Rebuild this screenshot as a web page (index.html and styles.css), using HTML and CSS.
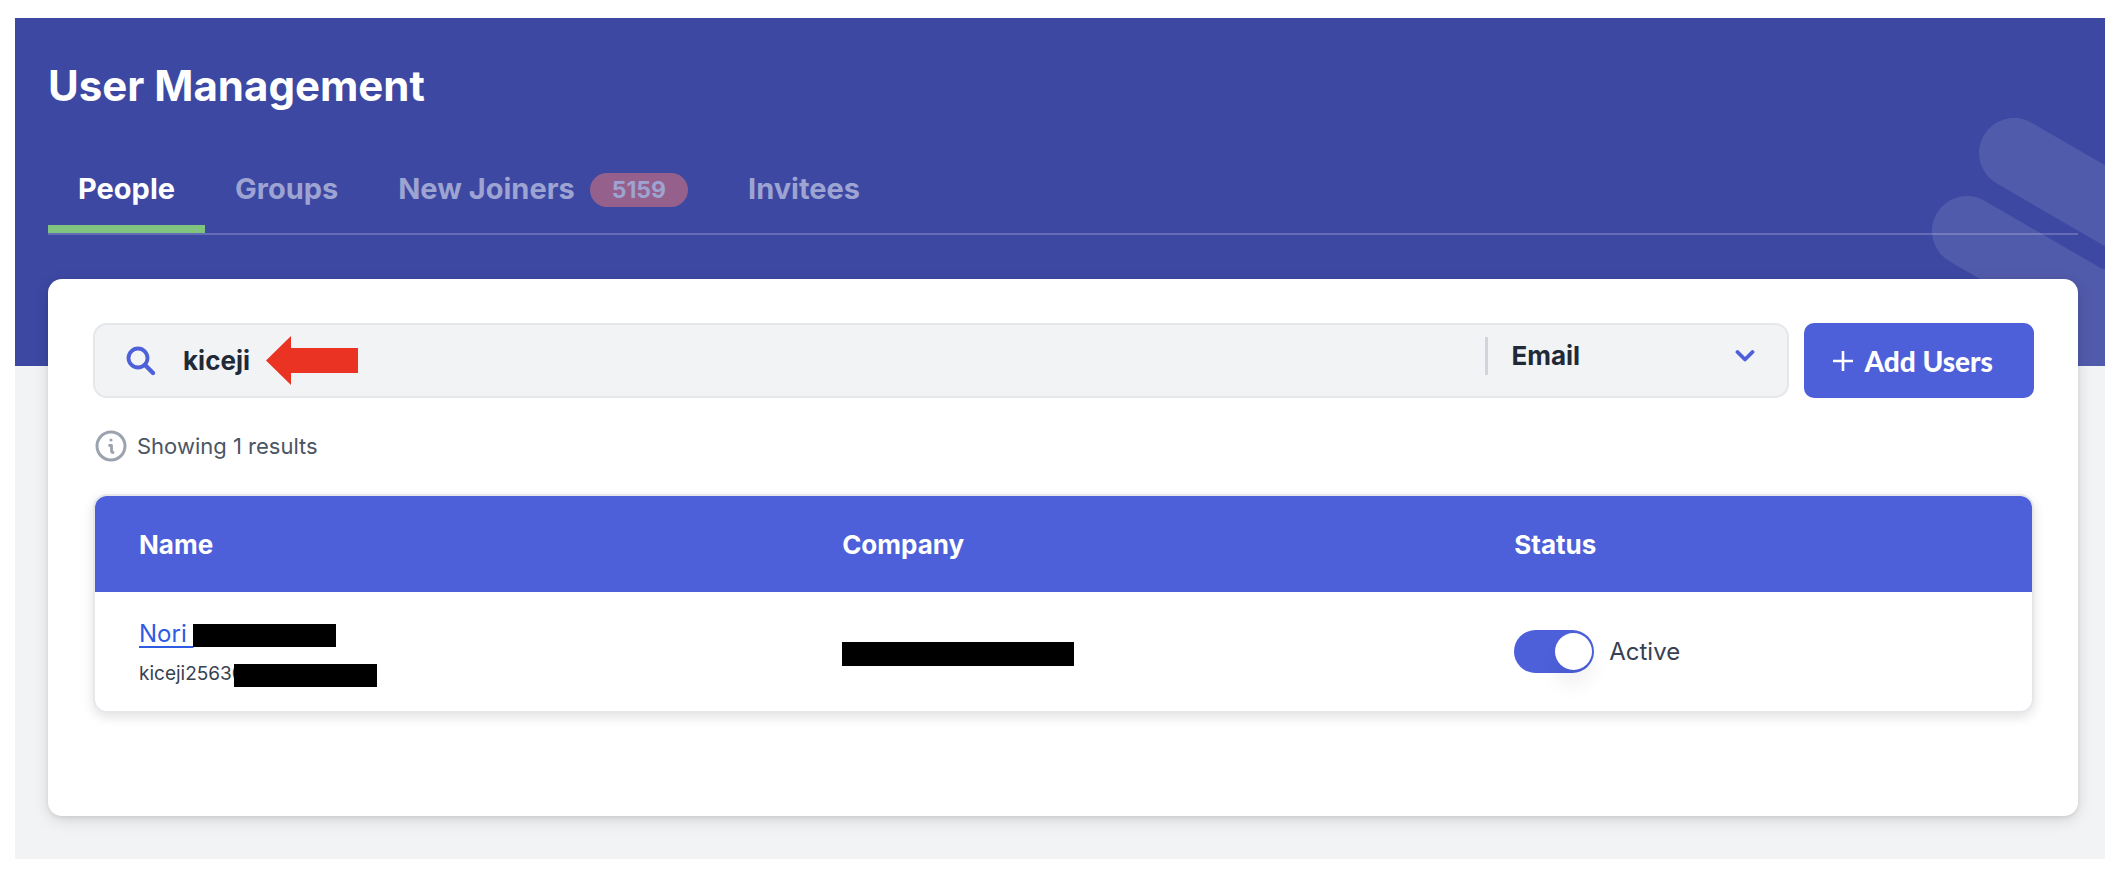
FILE: index.html
```
<!DOCTYPE html>
<html lang="en">
<head>
  <meta charset="UTF-8" />
  <meta name="viewport" content="width=device-width, initial-scale=1.0"/>
  <title>User Management</title>
  <link rel="stylesheet" href="styles.css">
</head>
<body>

  <div class="page">
    <header class="hero">
      <svg class="hero-shape" width="173" height="249" viewBox="0 0 173 249" aria-hidden="true">
        <g opacity="0.1" fill="#fff" stroke="#fff">
          <path d="M82 36 L232 123" stroke-width="70" stroke-linecap="round"/>
          <path d="M35 114 L185 201" stroke-width="70" stroke-linecap="round"/>
          <path d="M100 152 H173 V249 H100 Z" stroke="none"/>
        </g>
      </svg>
      <h1>User Management</h1>
      <nav class="tabs">
        <a href="#people" class="tab active">People</a>
        <a href="#groups" class="tab">Groups</a>
        <a href="#joiners" class="tab">New Joiners <span class="badge">5159</span></a>
        <a href="#invitees" class="tab">Invitees</a>
      </nav>
    </header>

    <main class="card">
      <div class="toolbar">
        <div class="search">
          <svg class="search-icon" width="32" height="32" viewBox="0 0 32 32" fill="none" stroke="#4d60da" stroke-linecap="round" aria-hidden="true">
            <circle cx="13" cy="13" r="9.5" stroke-width="3.8"/>
            <path d="M20 20 L28 28" stroke-width="4.4"/>
          </svg>
          <input class="search-input" type="text" value="kiceji" aria-label="Search users">
          <div class="filter">
            <select class="filter-select" aria-label="Search by">
              <option>Email</option>
              <option>Name</option>
            </select>
            <svg class="chevron" width="20" height="14" viewBox="0 0 20 14" fill="none" stroke="#4d60da" stroke-width="3.8" stroke-linecap="round" stroke-linejoin="round" aria-hidden="true">
              <path d="M2.5 3 L10 10.5 L17.5 3"/>
            </svg>
          </div>
          <svg class="pointer" width="92" height="49" viewBox="0 0 92 49" aria-hidden="true">
            <path d="M0 24.5 L25 0 V12 H92 V37 H25 V49 Z" fill="#ea3323"/>
          </svg>
        </div>
        <button class="add-btn" type="button">
          <svg width="22" height="22" viewBox="0 0 22 22" stroke="#fff" stroke-width="2.6" aria-hidden="true">
            <path d="M11 1 V21 M1 11 H21"/>
          </svg>
          Add Users
        </button>
      </div>

      <p class="results">
        <svg width="32" height="32" viewBox="0 0 32 32" fill="none" stroke="#9ca3af" aria-hidden="true">
          <circle cx="16" cy="16" r="14" stroke-width="3"/>
          <circle cx="16" cy="10" r="1.6" fill="#9ca3af" stroke="none"/>
          <path d="M14.5 15.5 H16.5 V20.5 Q16.500 22.500 18 22.500" stroke-width="2.8" stroke-linecap="round" stroke-linejoin="round"/>
        </svg>
        Showing 1 results
      </p>

      <div class="table-box">
        <table class="users">
          <thead>
            <tr>
              <th class="col-name">Name</th>
              <th class="col-company">Company</th>
              <th>Status</th>
            </tr>
          </thead>
          <tbody>
            <tr>
              <td class="user">
                <div class="user-name"><a href="#user">Nori&nbsp;</a><span class="redacted"></span></div>
                <div class="user-mail">kiceji25630<span class="redacted"></span></div>
              </td>
              <td><span class="redacted wide"></span></td>
              <td>
                <label class="status">
                  <input class="toggle" type="checkbox" checked>
                  Active
                </label>
              </td>
            </tr>
          </tbody>
        </table>
      </div>
    </main>
  </div>

</body>
</html>
```
FILE: styles.css
```
* {
  box-sizing: border-box;
}

body {
  margin: 0;
  padding: 18px 21px 13px 15px;
  background: #fff;
  font-family: Inter, "Liberation Sans", sans-serif;
  color: #374151;
}

.page {
  background: #f2f3f5;
  padding-bottom: 43px;
}

.hero {
  position: relative;
  background: #3d48a3;
  padding: 40px 27px 131px 33px;
}

.hero-shape {
  position: absolute;
  right: 0;
  bottom: 0;
}

h1 {
  margin: 0 0 34px;
  font-size: 42px;
  line-height: 56px;
  font-weight: 700;
  color: #fff;
}

.tabs {
  position: relative;
  display: flex;
  border-bottom: 2px solid rgba(255, 255, 255, 0.2);
}

.tab {
  display: flex;
  align-items: center;
  gap: 15px;
  height: 85px;
  padding: 4px 30px 0;
  border-bottom: 8px solid transparent;
  font-size: 29px;
  font-weight: 700;
  color: #9ea4d2;
  text-decoration: none;
}

.tab.active {
  color: #fff;
  border-bottom-color: #81c47f;
}

.badge {
  margin-top: 3px;
  padding: 0 22px;
  border-radius: 17px;
  background: #96608c;
  font-size: 23px;
  line-height: 34px;
}

.card {
  position: relative;
  margin: -87px 27px 0 33px;
  padding: 44px 44px 103px 45px;
  border-radius: 14px;
  background: #fff;
  box-shadow: 0 4px 16px rgba(0, 0, 0, 0.12), 0 2px 4px rgba(0, 0, 0, 0.08);
}

.toolbar {
  display: flex;
  gap: 15px;
}

.search {
  position: relative;
  flex: 1;
  display: flex;
  align-items: center;
  height: 75px;
  padding: 0 32px 0 30px;
  border: 2px solid #e5e7eb;
  border-radius: 14px;
  background: #f2f3f5;
}

.search-input {
  flex: 1;
  min-width: 0;
  margin-left: 26px;
  padding: 0;
  border: none;
  outline: none;
  background: none;
  font: 700 26px/36px Inter, "Liberation Sans", sans-serif;
  color: #1f2937;
}

/* annotation arrow over the search text */
.pointer {
  position: absolute;
  left: 171px;
  top: 11px;
}

.filter {
  display: flex;
  align-items: center;
  align-self: flex-start;
  width: 270px;
  height: 38px;
  margin-top: 12px;
  border-left: 3px solid #d1d5db;
}

.filter-select {
  flex: 1;
  padding: 0 0 0 23px;
  border: none;
  outline: none;
  background: none;
  appearance: none;
  font: 700 26px/36px Inter, "Liberation Sans", sans-serif;
  color: #1f2937;
}

.add-btn {
  display: flex;
  align-items: center;
  gap: 10px;
  padding: 0 41px 0 28px;
  border: none;
  border-radius: 10px;
  background: #4d60da;
  font: 900 28px/36px Lato, "Liberation Sans", sans-serif;
  color: #fff;
  cursor: pointer;
}

.results {
  display: flex;
  align-items: center;
  gap: 10px;
  margin: 32px 0;
  padding-left: 2px;
  font-size: 22px;
  line-height: 32px;
  color: #4b5563;
}

.table-box {
  overflow: hidden;
  border: 2px solid #e5e7eb;
  border-radius: 14px;
  box-shadow: 0 4px 12px rgba(0, 0, 0, 0.12);
}

.users {
  width: 100%;
  border-collapse: collapse;
  table-layout: fixed;
}

.users th {
  height: 96px;
  padding: 0 0 0 44px;
  background: #4d60da;
  font-size: 26px;
  font-weight: 700;
  text-align: left;
  color: #fff;
}

.col-name {
  width: 36.3%;
}

.col-company {
  width: 34.7%;
}

.users td {
  height: 119px;
  padding: 0 0 0 44px;
}

.users .user {
  padding-top: 4px;
}

.user-name,
.user-mail {
  display: flex;
  align-items: center;
  height: 40px;
}

.user-name {
  font-size: 24px;
}

.user-name a {
  color: #2f5be3;
  text-underline-offset: 4px;
}

.user-mail {
  font-size: 19px;
}

.redacted {
  display: block;
  width: 143px;
  height: 23px;
  margin-top: 4px;
  background: #000;
}

.user-mail .redacted {
  position: relative;
  margin-left: -10px;
}

.redacted.wide {
  width: 232px;
  height: 24px;
}

.status {
  display: flex;
  align-items: center;
  gap: 15px;
  font-size: 24px;
}

.toggle {
  display: flex;
  align-items: center;
  justify-content: flex-end;
  width: 80px;
  height: 43px;
  margin: 0;
  padding: 0 2px;
  border-radius: 22px;
  background: #4d60da;
  appearance: none;
}

.toggle::after {
  content: "";
  width: 37px;
  height: 37px;
  border-radius: 50%;
  background: #fff;
  box-shadow: 0 16px 20px rgba(0, 0, 0, 0.06);
}
```
